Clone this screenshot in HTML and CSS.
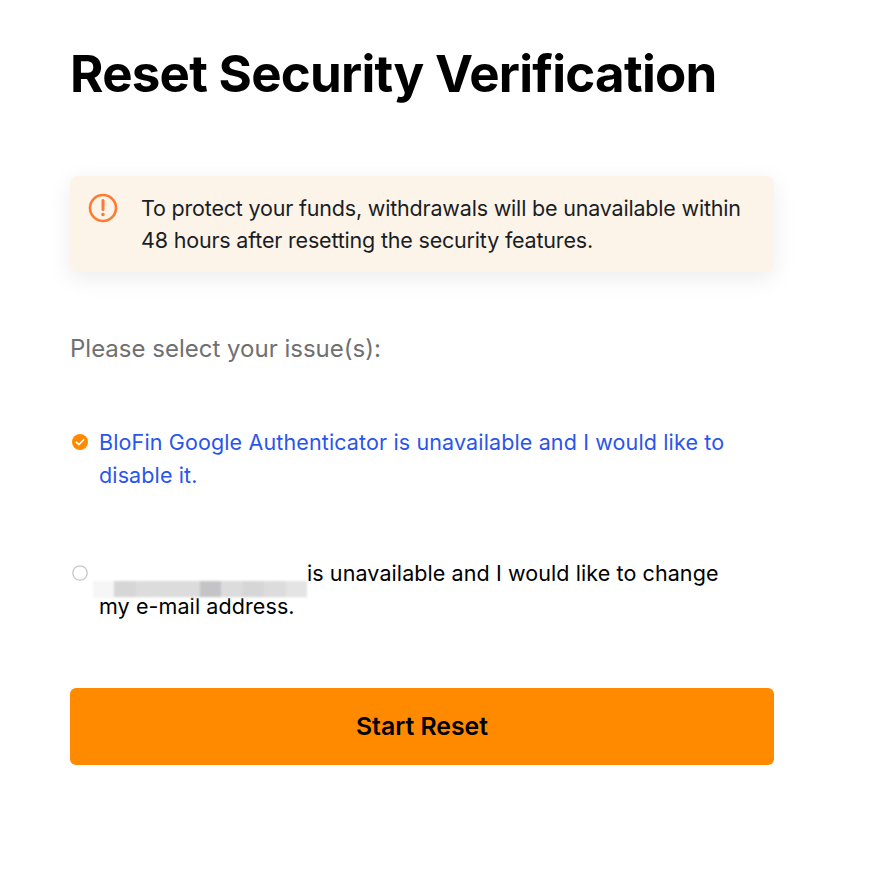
FILE: index.html
```html
<!DOCTYPE html>
<html lang="en">
<head>
<meta charset="utf-8">
<title>Reset Security Verification</title>
<link rel="stylesheet" href="styles.css">
</head>
<body>
<main class="page">
  <h1 class="title">Reset Security Verification</h1>
  <div class="notice">
    <svg class="notice-icon" viewBox="0 0 30 30" aria-hidden="true">
      <circle cx="15" cy="15" r="13" fill="none" stroke="#ff7a33" stroke-width="2.6"/>
      <path d="M15 7.5v9" fill="none" stroke="#ff7a33" stroke-width="3" stroke-linecap="round"/>
      <circle cx="15" cy="21.5" r="1.8" fill="#ff7a33"/>
    </svg>
    <p class="notice-text">To protect your funds, withdrawals will be unavailable within 48 hours after resetting the security features.</p>
  </div>
  <p class="prompt">Please select your issue(s):</p>
  <div class="option option-selected">
    <svg class="radio" viewBox="0 0 16 16" aria-hidden="true">
      <circle cx="8" cy="8" r="8" fill="#ff8a00"/>
      <path d="M4.4 8.3l2.5 2.3 4.8-4.9" fill="none" stroke="#fff" stroke-width="1.6" stroke-linecap="round" stroke-linejoin="round"/>
    </svg>
    <span class="option-text">BloFin Google Authenticator is unavailable and I would like to disable it.</span>
  </div>
  <div class="option option-plain">
    <svg class="radio" viewBox="0 0 16 16" aria-hidden="true">
      <circle cx="8" cy="8" r="7.2" fill="none" stroke="#c6c6cc" stroke-width="1.3"/>
    </svg>
    <span class="option-text"><span class="redacted-space"></span>is unavailable and I would like to change my e-mail address.</span>
    <div class="redaction" aria-hidden="true">
      <i class="m0"></i><i class="m2"></i><i class="m4"></i><i class="m4"></i><i class="m4"></i><i class="m3"></i><i class="m4"></i><i class="m2"></i><i class="m4"></i><i class="m1"></i>
    </div>
  </div>
  <button class="start" type="button">Start Reset</button>
</main>
</body>
</html>
```
FILE: styles.css
```css
* { box-sizing: border-box; }
html, body { margin: 0; background: #fff; }
body { font-family: "Inter", "Noto Sans", sans-serif; color: #000; }
.page { width: 874px; height: 872px; padding: 38px 100px 0 70px; }
.title { margin: 0; font-size: 51px; line-height: 72px; font-weight: 700; letter-spacing: -0.74px; }
.notice { margin-top: 66px; height: 96px; padding: 16px 20px 0 18px; display: flex; gap: 23px; background: #fdf4e9; border-radius: 8px; box-shadow: 0 6px 24px rgba(0,0,0,.08); }
.notice-icon { width: 30px; height: 30px; flex: none; margin-top: 1px; }
.notice-text { margin: 0; font-size: 21.5px; line-height: 32px; color: #1a1d24; letter-spacing: -0.19px; }
.prompt { margin: 61px 0 0; font-size: 24px; line-height: 32px; color: #707070; }
.option { position: relative; display: flex; gap: 11px; font-size: 21.5px; line-height: 33px; width: 660px; letter-spacing: 0.09px; }
.option-selected { margin-top: 61px; color: #2b55ea; letter-spacing: 0.13px; }
.option-plain { margin-top: 65px; }
.radio { width: 16px; height: 16px; flex: none; margin: 8px 0 0 2px; }
.option-text { flex: 1; }
.redacted-space { display: inline-block; width: 208px; height: 1px; }
.redaction { position: absolute; left: 23px; top: -9px; width: 214px; height: 50px; padding-top: 33px; display: flex; background: linear-gradient(#fff 60%, #f9f9f9); filter: blur(0.8px); }
.redaction i { flex: 1; height: 16px; }
.m0 { background: #f6f6f6; flex: 0 0 11px; }
.m1 { background: #e4e4e4; }
.m2 { background: #d6d6d6; }
.m3 { background: #c4c4c6; }
.m4 { background: #dcdcdc; }
.start { display: block; width: 100%; height: 77px; margin-top: 65px; border: 0; border-radius: 6px; background: #ff8a00; color: #000; font: 600 24.8px/1 "Inter", "Noto Sans", sans-serif; }
```
